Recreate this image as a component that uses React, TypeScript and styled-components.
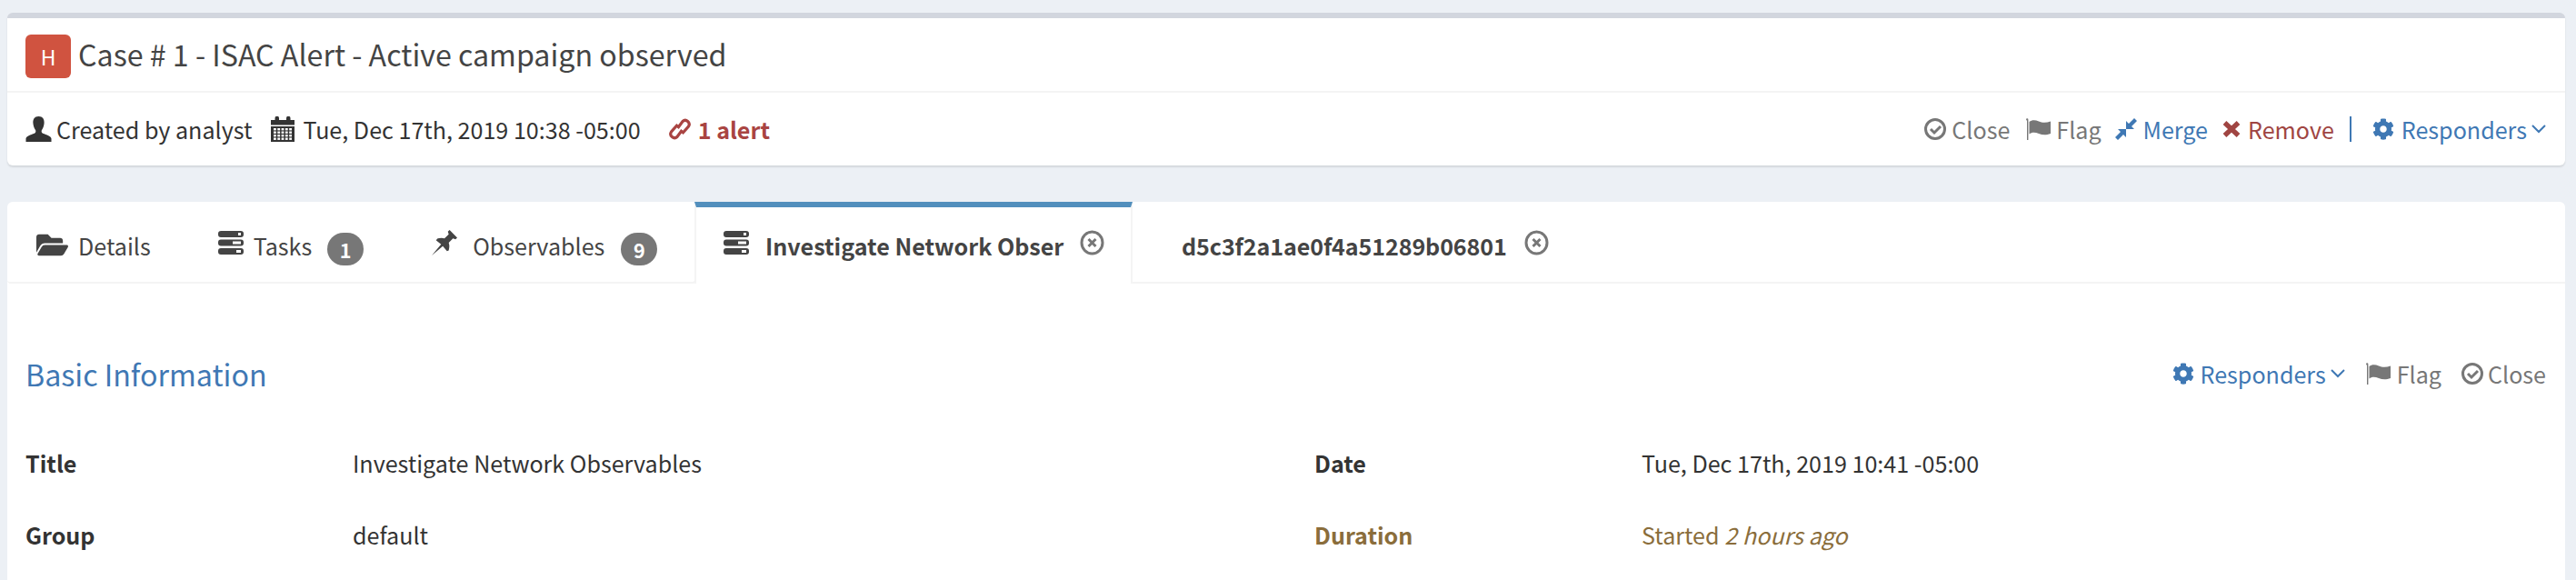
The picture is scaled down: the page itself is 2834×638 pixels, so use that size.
import React from 'react';
import styled, { createGlobalStyle } from 'styled-components';
import { FaCog, FaFolderOpen } from 'react-icons/fa';

const Global = createGlobalStyle`
  html, body { margin: 0; padding: 0; background: #ecf0f5; height: 638px; overflow: hidden; }
  body { font-family: "Noto Sans CJK SC", "Source Sans Pro", "Noto Sans", sans-serif; font-size: 25.1px; color: #333; }
`;

const Page = styled.div`
  padding: 14px 12px 0 8px;
  height: 638px;
  box-sizing: border-box;
  overflow: hidden;
`;

const CaseBox = styled.section`
  background: #fff;
  border-top: 6px solid #d2d6de;
  border-radius: 6px;
  box-shadow: 0 2px 2px rgba(0, 0, 0, 0.1);
  height: 168px;
  box-sizing: border-box;
`;

const TitleBar = styled.header`
  height: 80px;
  border-bottom: 2px solid #f4f4f4;
  display: flex;
  align-items: center;
  padding: 0 20px;
  gap: 8px;
`;

const Severity = styled.span`
  width: 50px;
  height: 48px;
  margin-top: 4px;
  border-radius: 6px;
  background: #d05340;
  color: #fff;
  font-size: 23px;
  display: flex;
  align-items: center;
  justify-content: center;
`;

const CaseTitle = styled.h1`
  margin: -2px 0 0;
  font-size: 32.2px;
  font-weight: 400;
  line-height: 48px;
  color: #444;
`;

const MetaBar = styled.div`
  height: 80px;
  display: flex;
  align-items: center;
  justify-content: space-between;
  padding: 0 21px 0 20px;
`;

const MetaGroup = styled.div`
  display: flex;
  align-items: center;
`;

const MetaItem = styled.span<{ $ml?: number; $iconGap: number; $color?: string; $bold?: boolean }>`
  display: inline-flex;
  align-items: center;
  gap: ${p => p.$iconGap}px;
  line-height: 40px;
  margin-left: ${p => p.$ml ?? 0}px;
  color: ${p => p.$color ?? '#333'};
  font-weight: ${p => (p.$bold ? 700 : 400)};
  white-space: nowrap;
`;

const ActionLink = styled.a<{ $tone: string; $ml?: number; $iconGap?: number }>`
  display: inline-flex;
  align-items: center;
  gap: ${p => p.$iconGap ?? 6}px;
  line-height: 40px;
  margin-left: ${p => p.$ml ?? 0}px;
  color: ${p => p.$tone};
  white-space: nowrap;
`;

const Divider = styled.span`
  width: 2px;
  height: 28px;
  background: #3f78b4;
  margin: 0 23px 0 17px;
`;

const TabsBox = styled.section`
  margin-top: 40px;
  background: #fff;
  border-radius: 6px 6px 0 0;
  height: 420px;
`;

const TabBar = styled.nav`
  height: 90px;
  display: flex;
`;

const TabGroup = styled.div`
  width: 756px;
  height: 88px;
  display: flex;
  border-bottom: 2px solid #f4f4f4;
  border-right: 2px solid #f4f4f4;
  border-radius: 0 0 4px 4px;
  margin-right: -2px;
`;

const Tab = styled.div<{ $left: number }>`
  display: flex;
  align-items: center;
  padding: 8px 0 0 ${p => p.$left}px;
  height: 88px;
  box-sizing: border-box;
  color: #444;
  white-space: nowrap;
`;

const ActiveTab = styled.div`
  display: flex;
  align-items: center;
  width: 482px;
  height: 90px;
  box-sizing: border-box;
  padding-left: 30px;
  border-top: 6px solid #528fbd;
  border-left: 2px solid #f4f4f4;
  border-right: 2px solid #f4f4f4;
  background: #fff;
  color: #444;
  white-space: nowrap;
`;

const TrailingTab = styled.div`
  flex: 1;
  height: 90px;
  box-sizing: border-box;
  border-bottom: 2px solid #f4f4f4;
  display: flex;
  align-items: center;
  padding: 8px 0 0 54px;
  color: #444;
`;

const TabLabel = styled.span<{ $bold?: boolean; $ml: number }>`
  margin-left: ${p => p.$ml}px;
  font-weight: ${p => (p.$bold ? 700 : 400)};
  line-height: 40px;
  white-space: nowrap;
`;

const CaseIdLabel = styled(TabLabel)`
  letter-spacing: -0.1px;
`;

const TabIconSlot = styled.span<{ $s?: number; $lift: number }>`
  display: inline-flex;
  font-size: ${p => p.$s ?? 16}px;
  margin-top: -${p => p.$lift}px;
  flex: none;
`;

const CloseSlot = styled(TabIconSlot)<{ $ml: number }>`
  margin-left: ${p => p.$ml}px;
  color: #777;
`;

const Count = styled.span<{ $ml: number }>`
  margin-left: ${p => p.$ml}px;
  width: 40px;
  height: 36px;
  margin-top: 8px;
  border-radius: 18px;
  background: #777;
  color: #fff;
  font-size: 21.6px;
  font-weight: 700;
  display: flex;
  align-items: center;
  justify-content: center;
`;

const Panel = styled.div`
  padding: 75px 21px 0 20px;
`;

const PanelHead = styled.div`
  height: 48px;
  display: flex;
  align-items: center;
  justify-content: space-between;
`;

const SectionTitle = styled.h2`
  margin: 0;
  font-size: 32.2px;
  font-weight: 400;
  line-height: 48px;
  color: #3f78b4;
`;

const FieldGrid = styled.dl`
  margin: 34px 0 0;
  display: grid;
  grid-template-columns: 360px 1058px 360px 1fr;
  grid-auto-rows: 79px;
  align-items: center;
`;

const FieldName = styled.dt<{ $tone?: string }>`
  font-weight: 700;
  line-height: 40px;
  color: ${p => p.$tone ?? '#333'};
`;

const FieldValue = styled.dd<{ $tone?: string }>`
  margin: 0;
  line-height: 40px;
  color: ${p => p.$tone ?? '#333'};
`;

const Svg = styled.svg<{ $w: number; $h: number }>`
  width: ${p => p.$w}px;
  height: ${p => p.$h}px;
  flex: none;
  fill: currentColor;
`;

const OutlineSvg = styled(Svg)`
  fill: none;
  stroke: currentColor;
`;

const ChevronSvg = styled(OutlineSvg)<{ $pull: number }>`
  margin-left: -${p => p.$pull}px;
`;

const Sized = styled.span<{ $s: number }>`
  display: inline-flex;
  font-size: ${p => p.$s}px;
`;

const UserIcon = () => (
  <Svg $w={29} $h={28} viewBox="0 0 29 29">
    <path d="M14.5 0c-4.6 0-6.6 3.3-6.3 7.7.2 2.8 1.2 5.6 2.5 7.5 1 1.5.6 3.3-1 4.1C5.5 21 0 22.5 0 25.5V29h29v-3.5c0-3-5.5-4.5-9.7-6.2-1.6-.8-2-2.6-1-4.1 1.3-1.9 2.3-4.7 2.5-7.5C21.1 3.3 19.1 0 14.5 0z" />
  </Svg>
);

const calendarCols = [3, 7.3, 11.6, 15.9, 20.2];
const calendarRows = [13, 16.5, 20, 23.5];

const CalendarIcon = () => (
  <Svg $w={26} $h={28} viewBox="0 0 26 28">
    <path d="M0 4h4.5V2a2 2 0 0 1 4.5 0v2h8V2a2 2 0 0 1 4.5 0v2H26v5.5H0zM0 11h26v17H0z" />
    {calendarRows.map(y =>
      calendarCols.map(x => <rect key={`${x}-${y}`} x={x} y={y} width="2.8" height="2.4" fill="#fff" />)
    )}
  </Svg>
);

const ChainIcon = () => (
  <OutlineSvg $w={26} $h={28} viewBox="0 0 26 28" strokeWidth={3.2}>
    <path d="M10.5 13 16 5.5a4.3 4.3 0 0 1 6.5 5.5L15.5 19" />
    <path d="M15.5 15 10 22.5a4.3 4.3 0 0 1-6.5-5.5L10.5 9" />
  </OutlineSvg>
);

const FlagIcon = () => (
  <Svg $w={27} $h={24} viewBox="0 0 27 24">
    <path d="M0 1.5a1.2 1.2 0 0 1 2.400 0V24H1V3zM3.500 4c3-2.500 7-2 10.500-.5s8 1.800 13 0V17c-5 1.800-9 1.500-13 0s-7.500-2-10.500.5z" />
  </Svg>
);

const MergeIcon = () => (
  <Svg $w={24} $h={24} viewBox="0 0 24 24">
    <path d="M21 0l3 3-6 6 3 3h-9V3l3 3zM3 24l-3-3 6-6-3-3h9v9l-3-3z" />
  </Svg>
);

const CrossIcon = () => (
  <OutlineSvg $w={20} $h={18} viewBox="0 0 20 18" strokeWidth={5.4}>
    <path d="M2.500 2l15 14M17.500 2l-15 14" />
  </OutlineSvg>
);

const CheckCircleIcon = () => (
  <OutlineSvg $w={24} $h={24} viewBox="0 0 24 24" strokeWidth={3}>
    <circle cx="12" cy="12" r="10.5" />
    <path d="M7 12l4 4 7-7" />
  </OutlineSvg>
);

const CrossCircleIcon = () => (
  <OutlineSvg $w={27} $h={28} viewBox="0 0 27 28" strokeWidth={3}>
    <ellipse cx="13.5" cy="14" rx="11.5" ry="12" />
    <path d="M9.500 10l8 8M17.500 10l-8 8" />
  </OutlineSvg>
);

const TasksIcon = () => (
  <Svg $w={28} $h={26} viewBox="0 0 28 26">
    <path fillRule="evenodd" d="M3 0h22a3 3 0 0 1 3 3v1a3 3 0 0 1-3 3H3a3 3 0 0 1-3-3V3a3 3 0 0 1 3-3zm19 2v3h3V2zM3 9.500h22a3 3 0 0 1 3 3v1a3 3 0 0 1-3 3H3a3 3 0 0 1-3-3v-1a3 3 0 0 1 3-3zm13 2v3h9v-3zM3 19h22a3 3 0 0 1 3 3v1a3 3 0 0 1-3 3H3a3 3 0 0 1-3-3v-1a3 3 0 0 1 3-3zm17 2v3h5v-3z" />
  </Svg>
);

const PinIcon = () => (
  <Svg $w={30} $h={28} viewBox="0 0 30 30">
    <path d="M0 30 11 17 5 12l2-2c3-1 6-1 8 0l5-5-1-3 2-2 9 9-2 2-3-1-5 5c1 3 1 5 0 9l-2 1-5-6z" />
  </Svg>
);

const Chevron = ({ pull }: { pull: number }) => (
  <ChevronSvg $w={16} $h={10} $pull={pull} viewBox="0 0 16 10" strokeWidth={2}>
    <path d="M1 1l7 7 7-7" />
  </ChevronSvg>
);

export default function App() {
  return (
    <Page>
      <Global />
      <CaseBox>
        <TitleBar>
          <Severity>H</Severity>
          <CaseTitle>Case # 1 - ISAC Alert - Active campaign observed</CaseTitle>
        </TitleBar>
        <MetaBar>
          <MetaGroup>
            <MetaItem $iconGap={5}><UserIcon />Created by analyst</MetaItem>
            <MetaItem $ml={21} $iconGap={9}><CalendarIcon />Tue, Dec 17th, 2019 10:38 -05:00</MetaItem>
            <MetaItem $ml={30} $iconGap={7} $color="#a94442" $bold><ChainIcon />1 alert</MetaItem>
          </MetaGroup>
          <MetaGroup>
            <ActionLink $tone="#777"><CheckCircleIcon />Close</ActionLink>
            <ActionLink $tone="#777" $ml={18}><FlagIcon />Flag</ActionLink>
            <ActionLink $tone="#3f78b4" $ml={15} $iconGap={7}><MergeIcon />Merge</ActionLink>
            <ActionLink $tone="#a04542" $ml={16} $iconGap={8}><CrossIcon />Remove</ActionLink>
            <Divider />
            <ActionLink $tone="#3f78b4" $iconGap={8}><Sized $s={24}><FaCog /></Sized>Responders<Chevron pull={3} /></ActionLink>
          </MetaGroup>
        </MetaBar>
      </CaseBox>
      <TabsBox>
        <TabBar>
          <TabGroup>
            <Tab $left={32}>
              <TabIconSlot $s={35} $lift={2}><FaFolderOpen /></TabIconSlot>
              <TabLabel $ml={11}>Details</TabLabel>
            </Tab>
            <Tab $left={74}>
              <TabIconSlot $lift={6}><TasksIcon /></TabIconSlot>
              <TabLabel $ml={11}>Tasks</TabLabel>
              <Count $ml={17}>1</Count>
            </Tab>
            <Tab $left={74}>
              <TabIconSlot $lift={6}><PinIcon /></TabIconSlot>
              <TabLabel $ml={16}>Observables</TabLabel>
              <Count $ml={18}>9</Count>
            </Tab>
          </TabGroup>
          <ActiveTab>
            <TabIconSlot $lift={6}><TasksIcon /></TabIconSlot>
            <TabLabel $ml={18} $bold>Investigate Network Obser</TabLabel>
            <CloseSlot $ml={18} $lift={6}><CrossCircleIcon /></CloseSlot>
          </ActiveTab>
          <TrailingTab>
            <CaseIdLabel $ml={0} $bold>d5c3f2a1ae0f4a51289b06801</CaseIdLabel>
            <CloseSlot $ml={19} $lift={6}><CrossCircleIcon /></CloseSlot>
          </TrailingTab>
        </TabBar>
        <Panel>
          <PanelHead>
            <SectionTitle>Basic Information</SectionTitle>
            <MetaGroup>
              <ActionLink $tone="#3f78b4" $iconGap={7}><Sized $s={24}><FaCog /></Sized>Responders<Chevron pull={2} /></ActionLink>
              <ActionLink $tone="#777" $ml={23} $iconGap={7}><FlagIcon />Flag</ActionLink>
              <ActionLink $tone="#777" $ml={22} $iconGap={5}><CheckCircleIcon />Close</ActionLink>
            </MetaGroup>
          </PanelHead>
          <FieldGrid>
            <FieldName>Title</FieldName>
            <FieldValue>Investigate Network Observables</FieldValue>
            <FieldName>Date</FieldName>
            <FieldValue>Tue, Dec 17th, 2019 10:41 -05:00</FieldValue>
            <FieldName>Group</FieldName>
            <FieldValue>default</FieldValue>
            <FieldName $tone="#8a6d3b">Duration</FieldName>
            <FieldValue $tone="#8a6d3b">Started <em>2 hours ago</em></FieldValue>
          </FieldGrid>
        </Panel>
      </TabsBox>
    </Page>
  );
}
